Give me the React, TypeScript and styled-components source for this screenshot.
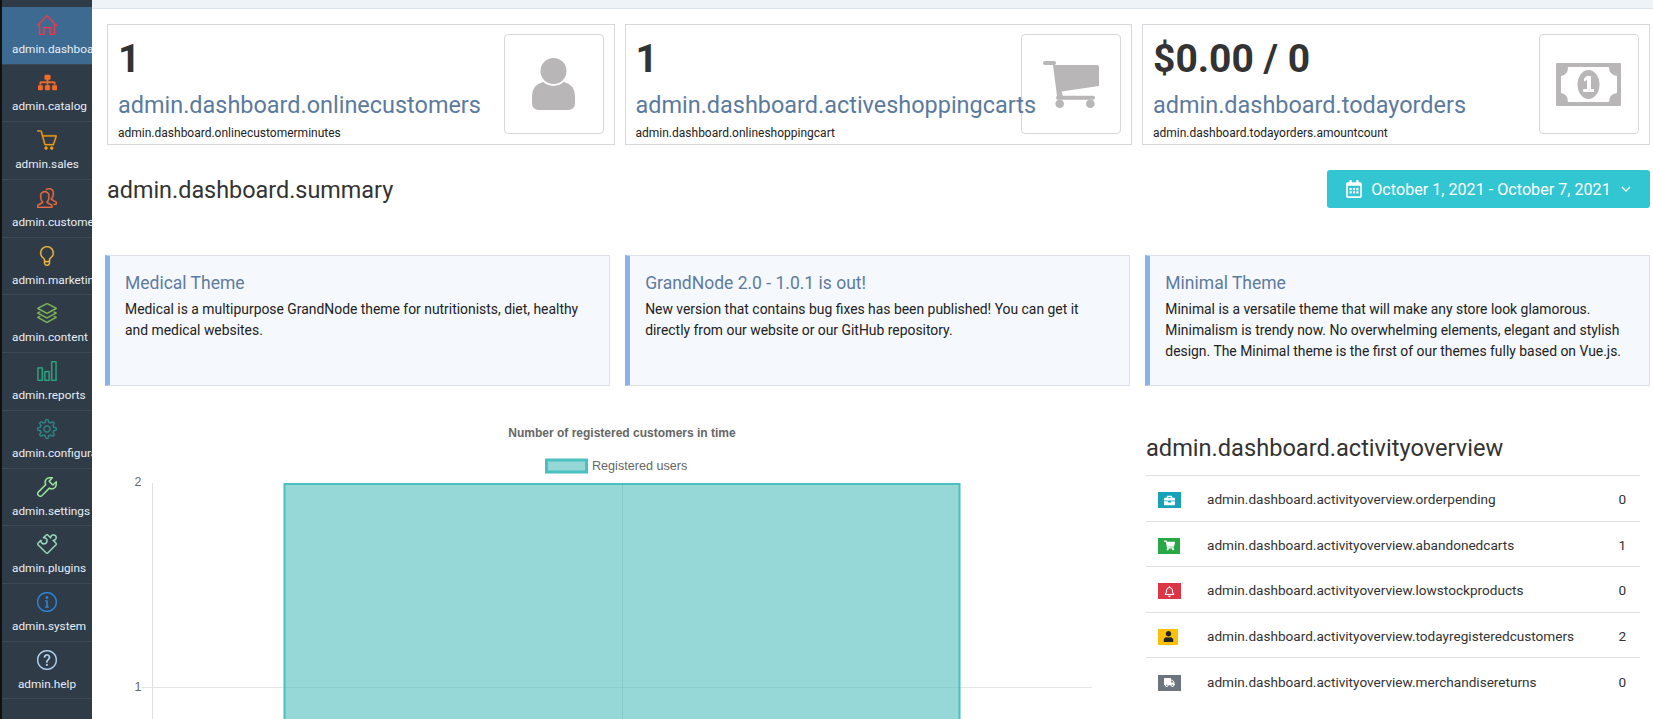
import React from 'react';
import styled, { createGlobalStyle } from 'styled-components';
import {
  SlHome,
  SlBasket,
  SlPeople,
  SlBulb,
  SlLayers,
  SlChart,
  SlSettings,
  SlWrench,
  SlPuzzle,
  SlInfo,
  SlQuestion,
} from 'react-icons/sl';
import { FaSitemap, FaShoppingCart, FaRegCalendarAlt, FaUser, FaBriefcase, FaRegBell, FaTruck } from 'react-icons/fa';

const GlobalStyle = createGlobalStyle`
  html, body { margin: 0; padding: 0; height: 100%; overflow: hidden; background: #fff; }
  body { font-family: Roboto, "Noto Sans", sans-serif; color: #333; }
`;

const GREY = '#b8b6b6';

/* the three big card glyphs, drawn after the reference */
const UserGlyph = () => (
  <svg width="43" height="52" viewBox="0 0 43 52">
    <path fill={GREY} d="M7 52Q0 52 0 45V38Q0 27 11 24H32Q43 27 43 38V45Q43 52 36 52Z" />
    <circle cx="21.5" cy="13" r="15" fill="#fff" />
    <circle cx="21.5" cy="13" r="13" fill={GREY} />
  </svg>
);

const CartGlyph = () => (
  <svg width="56" height="47" viewBox="0 0 56 47">
    <rect x="0" y="0" width="13" height="4" rx="2" fill={GREY} />
    <path fill={GREY} d="M10 4H54Q56 4 56 6V25L18.5 30.5L20 35H14Z" />
    <rect x="13" y="34.7" width="39" height="4" rx="2" fill={GREY} />
    <circle cx="16.7" cy="42.7" r="4.3" fill={GREY} />
    <circle cx="47.3" cy="42.7" r="4.3" fill={GREY} />
  </svg>
);

const MoneyGlyph = () => (
  <svg width="65" height="43" viewBox="0 0 65 43">
    <rect width="65" height="43" rx="1" fill={GREY} />
    <path fill="#fff" d="M12 4H53Q53 12 61 13V30Q53 31 53 39H12Q12 31 5 30V13Q12 12 12 4Z" />
    <ellipse cx="32.5" cy="21.5" rx="11" ry="14.5" fill={GREY} />
    <path fill="#fff" d="M31 13H35V26H38V29H27V26H31V17L28 18.500V15.500Z" />
  </svg>
);

const navItems = [
  { label: 'admin.dashboard', icon: SlHome, color: '#f5364a', active: true },
  { label: 'admin.catalog', icon: FaSitemap, color: '#f36a2b' },
  { label: 'admin.sales', icon: SlBasket, color: '#f39c12' },
  { label: 'admin.customers', icon: SlPeople, color: '#ee6b3f' },
  { label: 'admin.marketing', icon: SlBulb, color: '#f4b63f' },
  { label: 'admin.content', icon: SlLayers, color: '#7fb85a' },
  { label: 'admin.reports', icon: SlChart, color: '#2fa583' },
  { label: 'admin.configuration', icon: SlSettings, color: '#2f8585' },
  { label: 'admin.settings', icon: SlWrench, color: '#a0f0a0' },
  { label: 'admin.plugins', icon: SlPuzzle, color: '#9fe0c0' },
  { label: 'admin.system', icon: SlInfo, color: '#2f87e0' },
  { label: 'admin.help', icon: SlQuestion, color: '#b5d8f5' },
];

const stats = [
  { value: '1', title: 'admin.dashboard.onlinecustomers', note: 'admin.dashboard.onlinecustomerminutes', glyph: <UserGlyph /> },
  { value: '1', title: 'admin.dashboard.activeshoppingcarts', note: 'admin.dashboard.onlineshoppingcart', glyph: <CartGlyph /> },
  { value: '$0.00 / 0', title: 'admin.dashboard.todayorders', note: 'admin.dashboard.todayorders.amountcount', glyph: <MoneyGlyph /> },
];

const news = [
  {
    title: 'Medical Theme',
    text: 'Medical is a multipurpose GrandNode theme for nutritionists, diet, healthy and medical websites.',
  },
  {
    title: 'GrandNode 2.0 - 1.0.1 is out!',
    text: 'New version that contains bug fixes has been published! You can get it directly from our website or our GitHub repository.',
  },
  {
    title: 'Minimal Theme',
    text: 'Minimal is a versatile theme that will make any store look glamorous. Minimalism is trendy now. No overwhelming elements, elegant and stylish design. The Minimal theme is the first of our themes fully based on Vue.js.',
  },
];

const activity = [
  { label: 'admin.dashboard.activityoverview.orderpending', count: 0, icon: FaBriefcase, bg: '#17a2b8', fg: '#fff', w: 23 },
  { label: 'admin.dashboard.activityoverview.abandonedcarts', count: 1, icon: FaShoppingCart, bg: '#28a745', fg: '#fff', w: 22 },
  { label: 'admin.dashboard.activityoverview.lowstockproducts', count: 0, icon: FaRegBell, bg: '#dc3545', fg: '#fff', w: 23 },
  { label: 'admin.dashboard.activityoverview.todayregisteredcustomers', count: 2, icon: FaUser, bg: '#ffc107', fg: '#212529', w: 20 },
  { label: 'admin.dashboard.activityoverview.merchandisereturns', count: 0, icon: FaTruck, bg: '#6c757d', fg: '#fff', w: 23 },
];

const App = () => (
  <>
    <GlobalStyle />
    <Page>
      <Sidebar>
        <SideTop />
        {navItems.map(({ label, icon: Icon, color, active }) => (
          <NavItem key={label} $active={active}>
            <Icon size={label === 'admin.catalog' ? 19 : 20} color={color} />
            <NavLabel>{label}</NavLabel>
          </NavItem>
        ))}
      </Sidebar>
      <Main>
        <TopBar />
        <Content>
          <StatRow>
            {stats.map(({ value, title, note, glyph }) => (
              <StatCard key={title}>
                <StatValue>{value}</StatValue>
                <StatTitle>{title}</StatTitle>
                <StatNote>{note}</StatNote>
                <StatIcon>{glyph}</StatIcon>
              </StatCard>
            ))}
          </StatRow>
          <SummaryRow>
            <Heading>admin.dashboard.summary</Heading>
            <DateButton>
              <FaRegCalendarAlt size={18} />
              <DateText>October 1, 2021 - October 7, 2021</DateText>
              <svg width="10" height="6" viewBox="0 0 10 6">
                <path d="M1 1l4 4 4-4" fill="none" stroke="#fff" strokeWidth="1.3" />
              </svg>
            </DateButton>
          </SummaryRow>
          <NewsRow>
            {news.map((item) => (
              <NewsCard key={item.title}>
                <NewsTitle>{item.title}</NewsTitle>
                <NewsText>{item.text}</NewsText>
              </NewsCard>
            ))}
          </NewsRow>
          <BottomRow>
            <ChartBox>
              <svg width="1000" height="320" viewBox="0 0 1000 320">
                <text x="515" y="36" textAnchor="middle" fontFamily="Liberation Sans" fontSize="12" fontWeight="700" fill="#666">
                  Number of registered customers in time
                </text>
                <rect x="439.5" y="59" width="40" height="12" fill="#96d8d8" stroke="#4bc0c0" strokeWidth="3" />
                <text x="485" y="69" fontFamily="Liberation Sans" fontSize="12.6" fill="#666">
                  Registered users
                </text>
                <text x="31" y="85" textAnchor="middle" fontFamily="Liberation Sans" fontSize="12.500" fill="#666">2</text>
                <text x="31" y="290" textAnchor="middle" fontFamily="Liberation Sans" fontSize="12.500" fill="#666">1</text>
                <line x1="34" y1="286.5" x2="985" y2="286.5" stroke="#e5e5e5" />
                <line x1="45.5" y1="82" x2="45.5" y2="320" stroke="#e0e0e0" />
                <rect x="177.5" y="83" width="675" height="260" fill="#96d8d8" stroke="#4bc0c0" strokeWidth="2" />
                <line x1="515.5" y1="82" x2="515.5" y2="320" stroke="#000" strokeOpacity="0.07" />
                <line x1="177.5" y1="286.5" x2="852.5" y2="286.5" stroke="#000" strokeOpacity="0.05" />
              </svg>
            </ChartBox>
            <ActivityBox>
              <ActivityHeading>admin.dashboard.activityoverview</ActivityHeading>
              {activity.map(({ label, count, icon: Icon, bg, fg, w }) => (
                <ActivityRow key={label}>
                  <BadgeCell>
                    <Badge $bg={bg} $w={w}>
                      <Icon size={11} color={fg} />
                    </Badge>
                  </BadgeCell>
                  <ActivityLabel>{label}</ActivityLabel>
                  <ActivityCount>{count}</ActivityCount>
                </ActivityRow>
              ))}
            </ActivityBox>
          </BottomRow>
        </Content>
      </Main>
    </Page>
  </>
);

export default App;

const Page = styled.div`
  display: flex;
  height: 719px;
  overflow: hidden;
`;

const Sidebar = styled.nav`
  width: 90px;
  flex: none;
  background: #2f3b47;
  border-left: 2px solid #111;
  overflow: hidden;
`;

const SideTop = styled.div`
  height: 7px;
`;

const NavItem = styled.div<{ $active?: boolean }>`
  height: 57.7px;
  box-sizing: border-box;
  padding-top: 8px;
  display: flex;
  flex-direction: column;
  align-items: center;
  background: ${(p) => (p.$active ? '#3d6a91' : 'transparent')};
  border-bottom: 1px solid #3c4854;
  overflow: hidden;
  svg {
    stroke-width: 14px;
  }
`;

const NavLabel = styled.div`
  margin-top: 6px;
  width: 70px;
  font-size: 11.8px;
  line-height: 16px;
  color: #e6eef5;
  text-align: center;
  white-space: nowrap;
`;

const Main = styled.main`
  flex: 1;
  min-width: 0;
`;

const TopBar = styled.div`
  height: 8px;
  background: #eef3f8;
  border-bottom: 1px solid #dde3ea;
`;

const Content = styled.div`
  padding: 15px 3.5px 0 15px;
`;

const StatRow = styled.div`
  display: grid;
  grid-template-columns: repeat(3, 1fr);
  gap: 10px;
`;

const StatCard = styled.div`
  position: relative;
  height: 121px;
  box-sizing: border-box;
  border: 1px solid #d6d8db;
  padding: 12px 10px 0;
`;

const StatValue = styled.div`
  font-size: 39px;
  font-weight: 700;
  line-height: 44px;
  color: #333;
`;

const StatTitle = styled.div`
  margin-top: 8px;
  font-size: 23.45px;
  line-height: 32px;
  color: #5b7a9e;
  position: relative;
  z-index: 1;
  white-space: nowrap;
`;

const StatNote = styled.div`
  margin-top: 4px;
  font-size: 12px;
  line-height: 16px;
  color: #222;
`;

const StatIcon = styled.div`
  position: absolute;
  top: 9px;
  right: 10px;
  width: 100px;
  height: 100px;
  box-sizing: border-box;
  border: 1px solid #d6d8db;
  border-radius: 4px;
  display: flex;
  align-items: center;
  justify-content: center;
`;

const SummaryRow = styled.div`
  display: flex;
  justify-content: space-between;
  align-items: flex-start;
  margin-top: 25px;
`;

const Heading = styled.h2`
  margin: 4px 0 0;
  font-size: 23.4px;
  font-weight: 400;
  line-height: 32px;
  color: #333;
`;

const DateButton = styled.div`
  width: 323px;
  height: 38px;
  box-sizing: border-box;
  background: #32c5d2;
  color: #fff;
  border-radius: 3px;
  display: flex;
  align-items: center;
  justify-content: center;
  gap: 8px;
  font-size: 16.15px;
`;

const DateText = styled.span`
  margin-right: 2px;
`;

const NewsRow = styled.div`
  display: grid;
  grid-template-columns: repeat(3, 1fr);
  gap: 15.5px;
  margin: 47px -0.5px 0 -2px;
`;

const NewsCard = styled.div`
  height: 131px;
  box-sizing: border-box;
  background: #f5f8fd;
  border: 1px solid #dde0e6;
  border-left: 5px solid #8ab4e8;
  padding: 15px 15px;
`;

const NewsTitle = styled.div`
  font-size: 17.5px;
  line-height: 24px;
  margin-bottom: 3.5px;
  color: #5f7b9e;
`;

const NewsText = styled.div`
  font-size: 13.9px;
  line-height: 21px;
  color: #222;
`;

const BottomRow = styled.div`
  display: flex;
  margin-top: 15px;
`;

const ChartBox = styled.div`
  width: 1039px;
  flex: none;
  height: 320px;
`;

const ActivityBox = styled.div`
  flex: 1;
  margin: 31px 10px 0 0;
  min-width: 0;
`;

const ActivityHeading = styled.h2`
  margin: 0;
  height: 43px;
  font-size: 23.6px;
  font-weight: 400;
  line-height: 32px;
  color: #333;
  border-bottom: 1px solid #dee2e6;
`;

const ActivityRow = styled.div`
  display: flex;
  align-items: center;
  height: 45.5px;
  box-sizing: border-box;
  border-bottom: 1px solid #dee2e6;
  font-size: 13.6px;
  color: #333;
  &:last-child {
    border-bottom: 0;
  }
`;

const BadgeCell = styled.div`
  width: 61px;
  padding: 4px 0 0 12px;
  box-sizing: border-box;
`;

const Badge = styled.div<{ $bg: string; $w: number }>`
  width: ${(p) => p.$w}px;
  height: 16px;
  background: ${(p) => p.$bg};
  display: flex;
  align-items: center;
  justify-content: center;
`;

const ActivityLabel = styled.div`
  flex: 1;
  padding-top: 2px;
  white-space: nowrap;
`;

const ActivityCount = styled.div`
  width: 21px;
  padding-top: 2px;
`;
